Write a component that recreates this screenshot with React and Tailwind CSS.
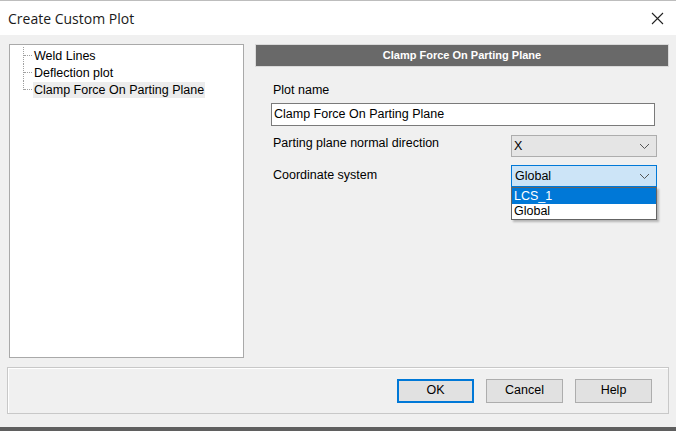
import React from 'react';

const ui = { fontFamily: '"Liberation Sans", Arial, sans-serif' };

function Chevron() {
  return (
    <svg width="11" height="7" viewBox="0 0 11 7" className="text-[#555]">
      <path d="M1 1l4.5 4.5L10 1" fill="none" stroke="currentColor" strokeWidth="1" />
    </svg>
  );
}

function TreeItem({ label, last, selected }) {
  return (
    <div className="relative flex items-center h-[17px] pl-[23px]">
      <div className={`absolute left-[13px] top-0 border-l border-dotted border-[#a0a0a0] ${last ? 'h-[9px]' : 'h-[17px]'}`} />
      <div className="absolute left-[14px] top-[8px] w-[8px] border-t border-dotted border-[#a0a0a0]" />
      <span className={`px-[1px] leading-[16px] ${selected ? 'bg-[#ececec]' : ''}`}>{label}</span>
    </div>
  );
}

export default function App() {
  return (
    <div className="w-[676px] h-[431px] flex flex-col bg-[#f0f0f0] text-[12.5px] text-black border-t border-[#bdbdbd]" style={ui}>
      {/* title bar */}
      <div className="h-[34px] bg-white flex items-center justify-between pl-[8px] pr-[12px]">
        <span className="text-[14px] text-[#1a1a1a]" style={{ fontFamily: '"Open Sans", "Noto Sans", sans-serif' }}>Create Custom Plot</span>
        <svg width="13" height="13" viewBox="0 0 13 13">
          <path d="M1 1l11 11M12 1L1 12" stroke="#222" strokeWidth="1.1" fill="none" />
        </svg>
      </div>

      <div className="flex-1 flex flex-col px-[7px] pt-[9px]">
        <div className="flex gap-[11px] pl-[2px]">
          {/* tree */}
          <div className="w-[236px] h-[314px] bg-white border border-[#a9a9a9] pt-[2px]">
            <TreeItem label="Weld Lines" />
            <TreeItem label="Deflection plot" />
            <TreeItem label="Clamp Force On Parting Plane" last selected />
          </div>

          {/* right panel */}
          <div className="w-[414px] flex flex-col">
            <div className="h-[23px] bg-[#696969] border border-[#d9d9d9] flex items-center justify-center text-white font-bold text-[11px]">
              Clamp Force On Parting Plane
            </div>
            <div className="relative pl-[16px] pr-[12px]">
              <div className="mt-[15px] pl-[2px] leading-[16px]">Plot name</div>
              <div className="mt-[5px] h-[23px] w-[384px] bg-white border border-[#7a7a7a] flex items-center pl-[2px]">
                Clamp Force On Parting Plane
              </div>
              <div className="mt-[9px] flex items-start">
                <div className="w-[240px] pl-[2px] leading-[16px]">Parting plane normal direction</div>
                <div className="h-[22px] w-[146px] bg-[#e5e5e5] border border-[#adadad] flex items-center justify-between pl-[2px] pr-[6px]">
                  <span>X</span>
                  <Chevron />
                </div>
              </div>
              <div className="mt-[8px] flex items-start">
                <div className="w-[240px] pl-[2px] leading-[16px] pt-[2px]">Coordinate system</div>
                <div className="relative">
                  <div className="h-[22px] w-[146px] bg-[#cce4f7] border border-[#0078d7] flex items-center justify-between pl-[3px] pr-[6px]">
                    <span>Global</span>
                    <Chevron />
                  </div>
                  <div className="absolute left-0 top-[22px] w-[146px] bg-white border border-[#646464] shadow-[2px_2px_2px_rgba(0,0,0,0.25)]">
                    <div className="h-[16px] bg-[#0078d7] text-white pl-[2px] leading-[16px]">LCS_1</div>
                    <div className="h-[15px] pl-[2px] leading-[15px]">Global</div>
                  </div>
                </div>
              </div>
            </div>
          </div>
        </div>

        {/* button bar */}
        <div className="mt-[9px] h-[47px] w-[662px] border border-[#c8c8c8] shadow-[inset_1px_1px_0_#fff] flex items-center justify-end gap-[12px] pr-[16px]">
          <button className="w-[77px] h-[24px] bg-[#e1e1e1] border-2 border-[#0078d7] text-[12.5px]">OK</button>
          <button className="w-[77px] h-[24px] bg-[#e1e1e1] border border-[#adadad] text-[12.5px]">Cancel</button>
          <button className="w-[77px] h-[24px] bg-[#e1e1e1] border border-[#adadad] text-[12.5px]">Help</button>
        </div>
      </div>
      <div className="h-[4px] bg-[#5f5f5f]" />
    </div>
  );
}
